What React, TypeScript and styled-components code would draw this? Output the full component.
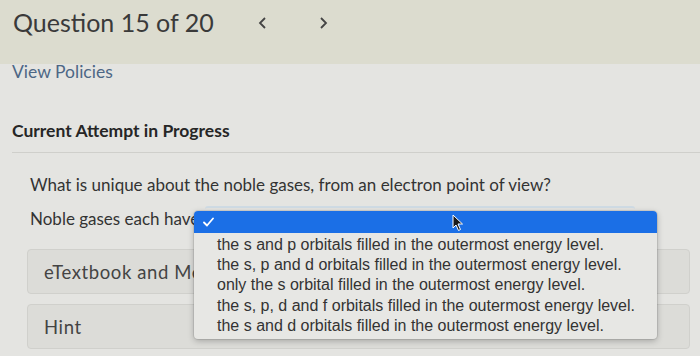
import styled, { createGlobalStyle } from 'styled-components';

const GlobalStyle = createGlobalStyle`
  html, body {
    margin: 0;
    padding: 0;
    background: #e3e3df;
    font-family: Lato, "Open Sans", sans-serif;
    color: #333;
  }
`

const Page = styled.div`
  width: 700px;
  height: 356px;
  overflow: hidden;
  display: flex;
  flex-direction: column;
`

const Header = styled.header`
  height: 64px;
  box-sizing: border-box;
  background: #dcdccf;
  display: flex;
  align-items: flex-start;
  padding: 6px 0 0 13px;
`

const Title = styled.h1`
  margin: 0;
  font-size: 25px;
  font-weight: 400;
  line-height: 32px;
  color: #3a3a3a;
`

const NavArrow = styled.svg<{ $gap: number }>`
  margin-left: ${p => p.$gap}px;
  margin-top: 11px;
  flex: none;
`

const Body = styled.main`
  flex: 1;
  background: #e4e4e1;
  padding: 0 0 0 12px;
`

const PolicyLink = styled.a`
  display: block;
  margin-top: -2px;
  font-size: 17.5px;
  line-height: 20px;
  color: #4d6785;
  text-decoration: none;
`

const AttemptTitle = styled.h2`
  margin: 39px 0 0;
  font-size: 17.5px;
  font-weight: 700;
  line-height: 20px;
  color: #262626;
  padding-bottom: 11px;
  border-bottom: 1px solid #cfcfcb;
`

const Question = styled.p`
  margin: 22px 0 0 18px;
  font-size: 17px;
  line-height: 20px;
  color: #333;
`

const AnswerRow = styled.div`
  position: relative;
  margin: 14px 0 0 18px;
  display: flex;
  align-items: center;
  font-size: 17px;
  line-height: 20px;
`

const SelectBox = styled.div`
  align-self: flex-start;
  margin-left: 6px;
  margin-top: -3px;
  width: 430px;
  height: 20px;
  border-top: 2px solid #cfdbe4;
  border-radius: 3px;
`

const Menu = styled.div`
  position: absolute;
  left: 164px;
  top: 2px;
  width: 463px;
  padding-bottom: 3px;
  background: #e7e7e4;
  border-radius: 4px;
  box-shadow: 0 2px 6px rgba(0, 0, 0, 0.25), 0 0 0 1px rgba(0, 0, 0, 0.08);
  font-family: "Liberation Sans", Arial, sans-serif;
  font-size: 16px;
  z-index: 2;
`

const Selected = styled.div`
  height: 22px;
  margin-bottom: 2px;
  background: #1b6fe6;
  border-radius: 4px 4px 0 0;
  display: flex;
  align-items: center;
  padding-left: 9px;
  position: relative;
`

const Option = styled.div`
  padding-left: 23px;
  line-height: 20.2px;
  color: #333;
  white-space: nowrap;
`

const Cursor = styled.svg`
  position: absolute;
  left: 258px;
  top: 3px;
`

const ToolButton = styled.div<{ $top: number }>`
  margin: ${p => p.$top}px 10px 0 15px;
  height: 45px;
  box-sizing: border-box;
  border: 1px solid #d0d0cc;
  border-radius: 4px;
  background: #dcdcd8;
  display: flex;
  align-items: center;
  padding-left: 16px;
  font-size: 18.5px;
  letter-spacing: 0.6px;
  color: #444;
`

const options = [
  'the s and p orbitals filled in the outermost energy level.',
  'the s, p and d orbitals filled in the outermost energy level.',
  'only the s orbital filled in the outermost energy level.',
  'the s, p, d and f orbitals filled in the outermost energy level.',
  'the s and d orbitals filled in the outermost energy level.',
]

export default function App() {
  return (
    <Page>
      <GlobalStyle />
      <Header>
        <Title>Question 15 of 20</Title>
        <NavArrow $gap={44} width="9" height="12" viewBox="0 0 9 12">
          <path d="M7 1 L2 6 L7 11" fill="none" stroke="#444" strokeWidth="1.8" />
        </NavArrow>
        <NavArrow $gap={52} width="9" height="12" viewBox="0 0 9 12">
          <path d="M2 1 L7 6 L2 11" fill="none" stroke="#444" strokeWidth="1.8" />
        </NavArrow>
      </Header>
      <Body>
        <PolicyLink href="#">View Policies</PolicyLink>
        <AttemptTitle>Current Attempt in Progress</AttemptTitle>
        <Question>What is unique about the noble gases, from an electron point of view?</Question>
        <AnswerRow>
          <span>Noble gases each have</span>
          <SelectBox />
          <Menu>
            <Selected>
              <svg width="11" height="10" viewBox="0 0 11 10">
                <path d="M1 5.5 L4 8.5 L10 1.5" fill="none" stroke="#fff" strokeWidth="1.8" strokeLinecap="round" strokeLinejoin="round" />
              </svg>
              <Cursor width="12" height="18" viewBox="0 0 12 18">
                <path d="M1 1 L1 14 L4 11 L6.5 16.5 L8.5 15.5 L6 10 L10.5 10 Z" fill="#1a1a1a" stroke="#fff" strokeWidth="1" />
              </Cursor>
            </Selected>
            {options.map(o => (
              <Option key={o}>{o}</Option>
            ))}
          </Menu>
        </AnswerRow>
        <ToolButton $top={20}>eTextbook and Media</ToolButton>
        <ToolButton $top={10}>Hint</ToolButton>
      </Body>
    </Page>
  )
}
